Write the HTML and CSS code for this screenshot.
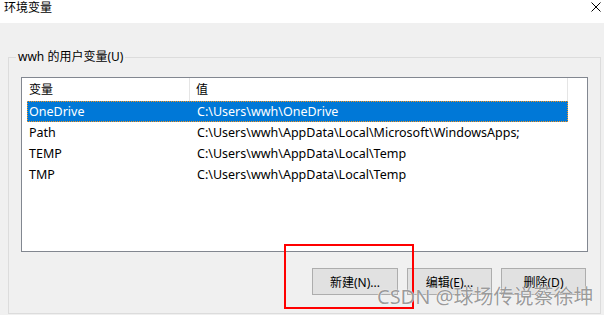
FILE: index.html
```html
<!DOCTYPE html>
<html lang="zh-CN">
<head>
  <meta charset="UTF-8">
  <title>环境变量</title>
  <link rel="stylesheet" href="styles.css">
</head>
<body>
  <div class="titlebar">
    <span class="title">环境变量</span>
    <svg class="close" width="10" height="10" viewBox="0 0 10 10">
      <path d="M0.5 0.5 L9.5 9.5 M9.5 0.5 L0.5 9.5" stroke="#000" stroke-width="1" fill="none"/>
    </svg>
  </div>

  <div class="group">
    <span class="group-label">wwh 的用户变量(U)</span>

    <div class="list">
      <div class="list-head">
        <div class="head-cell name">变量</div>
        <div class="head-cell value">值</div>
      </div>
      <div class="row selected">
        <div class="cell name">OneDrive</div>
        <div class="cell value">C:\Users\wwh\OneDrive</div>
      </div>
      <div class="row">
        <div class="cell name">Path</div>
        <div class="cell value">C:\Users\wwh\AppData\Local\Microsoft\WindowsApps;</div>
      </div>
      <div class="row">
        <div class="cell name">TEMP</div>
        <div class="cell value">C:\Users\wwh\AppData\Local\Temp</div>
      </div>
      <div class="row">
        <div class="cell name">TMP</div>
        <div class="cell value">C:\Users\wwh\AppData\Local\Temp</div>
      </div>
    </div>

    <div class="buttons">
      <button class="btn">新建(N)...</button>
      <button class="btn">编辑(E)...</button>
      <button class="btn">删除(D)</button>
    </div>
  </div>

  <!-- 标注和水印 -->
  <div class="highlight"></div>
  <div class="watermark">CSDN @球场传说蔡徐坤</div>
</body>
</html>
```

FILE: styles.css
```css
* {
  box-sizing: border-box;
  margin: 0;
  padding: 0;
}

body {
  width: 604px;
  height: 315px;
  overflow: hidden;
  position: relative;
  background: #f0f0f0;
  font-family: "Segoe UI", "Noto Sans", "Noto Sans CJK SC", sans-serif;
  font-size: 12px;
  color: #000;
}

.titlebar {
  height: 23px;
  background: #fff;
  display: flex;
  justify-content: space-between;
  align-items: flex-start;
  padding: 0 3px 0 4px;
}

.title {
  line-height: 16px;
}

.close {
  margin-top: 2px;
}

/* 分组框 */
.group {
  position: relative;
  width: 593px;
  height: 257px;
  margin: 34px 0 0 8px;
  border: 1px solid #dcdcdc;
}

.group-label {
  position: absolute;
  top: -9px;
  left: 7px;
  padding: 0 2px;
  background: #f0f0f0;
  line-height: 16px;
}

/* 列表 */
.list {
  width: 567px;
  height: 175px;
  margin: 19px 0 0 12px;
  border: 1px solid #828790;
  background: #fff;
}

.list-head {
  display: flex;
  height: 23px;
}

.head-cell {
  line-height: 23px;
  border-right: 1px solid #e5e5e5;
}

.head-cell.name {
  width: 168px;
  padding-left: 7px;
}

.head-cell.value {
  width: 378px;
  padding-left: 6px;
}

.row {
  display: flex;
  width: 541px;
  height: 21px;
  margin-left: 5px;
  border: 1px dotted transparent;
  font-size: 12.5px;
  line-height: 20px;
}

.row.selected {
  background: #0078d7;
  color: #fff;
  border-color: #f7941d;
}

.cell.name {
  width: 163px;
  padding-left: 1px;
}

.cell.value {
  padding-left: 6px;
}

/* 按钮 */
.buttons {
  display: flex;
  justify-content: flex-end;
  gap: 9px;
  margin: 16px 14px 0 0;
}

.btn {
  width: 86px;
  height: 27px;
  background: #e1e1e1;
  border: 1px solid #adadad;
  font: inherit;
  color: #000;
}

.btn + .btn {
  width: 85px;
}

.highlight {
  position: absolute;
  left: 284px;
  top: 244px;
  width: 130px;
  height: 65px;
  border: 2px solid #f00;
}

.watermark {
  position: absolute;
  left: 377px;
  top: 285px;
  font-size: 20px;
  line-height: 24px;
  color: rgba(110, 110, 110, 0.7);
  text-shadow: 0 0 1px #fff, 0 0 1px #fff;
  white-space: nowrap;
}
```
